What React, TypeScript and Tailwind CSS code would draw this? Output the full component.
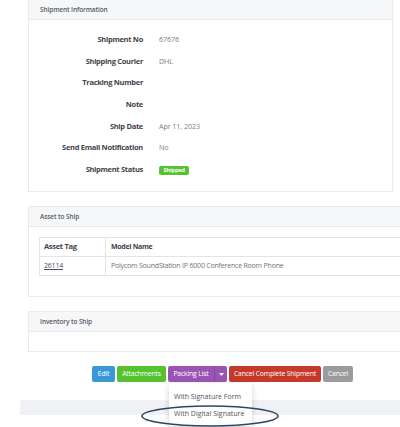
import React from "react";

const rows: [string, React.ReactNode][] = [
  ["Shipment No", "67676"],
  ["Shipping Courier", "DHL"],
  ["Tracking Number", ""],
  ["Note", ""],
  ["Ship Date", "Apr 11, 2023"],
  ["Send Email Notification", "No"],
  [
    "Shipment Status",
    <span className="inline-block rounded-[2px] bg-[#55c22f] px-[4.5px] text-[5.5px] font-bold leading-[9px] text-white">
      Shipped
    </span>,
  ],
];

function PanelHeader({ title }: { title: string }) {
  return (
    <div className="flex h-[20px] items-center border-b border-[#e9eaee] bg-[#f6f7f9] px-[11px] text-[6.5px] font-semibold tracking-[-0.1px] text-[#555a61]">
      {title}
    </div>
  );
}

export default function App() {
  return (
    <div className="relative h-[427px] w-[400px] overflow-hidden bg-white font-['Open_Sans',sans-serif]">
      {/* shipment details */}
      <div className="ml-[28px] h-[192px] w-[365px] border border-t-0 border-[#e9eaee]">
        <PanelHeader title="Shipment Information" />
        <div className="pt-[9px]">
          {rows.map(([label, value]) => (
            <div key={label} className="flex h-[21.6px] items-center">
              <div className="w-[114px] text-right text-[7.5px] font-bold tracking-[-0.3px] text-[#3f444a]">{label}</div>
              <div className="pl-[16px] text-[7.2px] tracking-[-0.1px] text-[#7a7e83]">{value}</div>
            </div>
          ))}
        </div>
      </div>

      {/* assets */}
      <div className="ml-[28px] mt-[14px] h-[91px] w-[390px] border border-[#e9eaee]">
        <PanelHeader title="Asset to Ship" />
        <div className="pl-[10px] pt-[10px]">
          <div className="w-[380px] border border-[#e3e4e8] text-[7px] tracking-[-0.2px]">
            <div className="flex h-[19px] border-b border-[#e3e4e8]">
              <div className="flex w-[66px] items-center border-r border-[#e3e4e8] px-[4px] text-[7.5px] font-bold tracking-[-0.3px] text-[#3f444a]">Asset Tag</div>
              <div className="flex items-center px-[5px] font-bold tracking-[-0.3px] text-[#3f444a]">Model Name</div>
            </div>
            <div className="flex h-[18px]">
              <div className="flex w-[66px] items-center border-r border-[#e3e4e8] px-[4px] text-[#4a5060] underline">26114</div>
              <div className="flex items-center px-[5px] text-[#6f7378]">
                Polycom SoundStation IP 6000 Conference Room Phone
              </div>
            </div>
          </div>
        </div>
      </div>

      {/* inventory */}
      <div className="ml-[28px] mt-[14px] h-[41px] w-[390px] border border-[#e9eaee]">
        <PanelHeader title="Inventory to Ship" />
      </div>

      {/* actions */}
      <div className="ml-[92px] mt-[14px] flex h-[16px] gap-[2px] text-[6.8px] tracking-[-0.15px] text-white">
        <button className="w-[23px] rounded-[2px] bg-[#3a98d9]">Edit</button>
        <button className="w-[49px] rounded-[2px] bg-[#55c22f]">Attachments</button>
        <div className="flex">
          <button className="w-[46px] rounded-l-[2px] bg-[#9a55b4]">Packing List</button>
          <button className="flex w-[13px] items-center justify-center rounded-r-[2px] border-l border-[#8a46a5] bg-[#9a55b4]">
            <svg width="5" height="3" viewBox="0 0 5 3">
              <path d="M0 0h5L2.5 3z" fill="white" />
            </svg>
          </button>
        </div>
        <button className="w-[92px] rounded-[2px] bg-[#c5392b]">Cancel Complete Shipment</button>
        <button className="w-[30px] rounded-[2px] bg-[#999b9d]">Cancel</button>
      </div>

      <div className="ml-[20px] mt-[18px] h-[15px] w-[390px] bg-[#f0f1f5]" />

      {/* packing list menu */}
      <div className="absolute left-[169px] top-[383px] w-[83px] rounded-[2px] bg-white pb-[3px] pt-[6px] text-[7px] text-[#4f5563] shadow-[0_2px_6px_rgba(0,0,0,0.18)]">
        <div className="flex h-[17px] items-center px-[5px]">With Signature Form</div>
        <div className="flex h-[17px] items-center px-[5px]">With Digital Signature</div>
      </div>

      <svg className="absolute left-[140px] top-[404px]" width="140" height="24" viewBox="0 0 140 24">
        <ellipse cx="70" cy="12" rx="68" ry="10" fill="none" stroke="#2b4766" strokeWidth="1.6" />
      </svg>
    </div>
  );
}
